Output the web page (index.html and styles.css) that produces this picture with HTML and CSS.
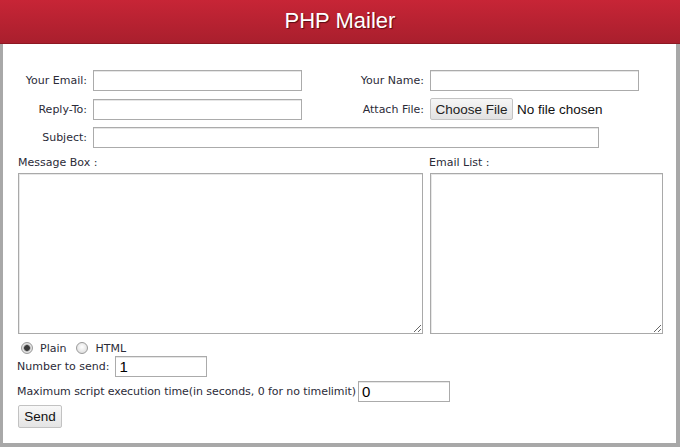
FILE: index.html
```html
<!DOCTYPE html>
<html>
<head>
<meta charset="utf-8">
<title>PHP Mailer</title>
<link rel="stylesheet" href="styles.css">
</head>
<body>
<header class="top"><h1 class="title">PHP Mailer</h1></header>
<main class="page">
  <form class="mailer">
    <div class="fields">
      <label class="lbl">Your Email:</label>
      <input class="txt" type="text">
      <label class="lbl">Your Name:</label>
      <input class="txt" type="text">
      <label class="lbl">Reply-To:</label>
      <input class="txt" type="text">
      <label class="lbl">Attach File:</label>
      <input class="file" type="file">
      <label class="lbl">Subject:</label>
      <input class="txt subject" type="text">
    </div>
    <div class="boxes">
      <div class="box">
        <div class="boxlbl">Message Box :</div>
        <textarea class="area msg"></textarea>
      </div>
      <div class="box">
        <div class="boxlbl">Email List :</div>
        <textarea class="area list"></textarea>
      </div>
    </div>
    <div class="lower">
      <div class="radios">
        <input class="radio" type="radio" name="fmt" checked><span class="rlbl">Plain</span>
        <input class="radio" type="radio" name="fmt"><span class="rlbl">HTML</span>
      </div>
      <div class="line"><span class="lbl2">Number to send:</span><input class="txt small" type="text" value="1"></div>
      <div class="line"><span class="lbl2 long">Maximum script execution time(in seconds, 0 for no timelimit)</span><input class="txt small" type="text" value="0"></div>
      <div class="line"><button class="send" type="button">Send</button></div>
    </div>
  </form>
</main>
</body>
</html>
```

FILE: styles.css
```css
html, body {
  margin: 0;
  padding: 0;
  background: #fff;
}
body {
  width: 680px;
  height: 447px;
  overflow: hidden;
  font-family: "DejaVu Sans", Verdana, sans-serif;
  font-size: 11px;
  color: #2b2b38;
}
.top {
  height: 43px;
  background: linear-gradient(#c72536, #a91f2d);
  border-bottom: 1px solid #8d1823;
  display: flex;
  align-items: center;
  justify-content: center;
}
.title {
  margin: 0;
  font-family: "Liberation Sans", Arial, sans-serif;
  font-weight: normal;
  font-size: 22px;
  color: #fff;
  text-shadow: 1px 1px 1px #5a0c14;
  line-height: 1;
  padding-bottom: 2px;
}
.page {
  height: 403px;
  box-sizing: border-box;
  border-style: solid;
  border-color: #a8a8a8;
  border-width: 0 4px 4px 3px;
}
.mailer {
  padding-top: 26px;
}
.fields {
  display: grid;
  grid-template-columns: 84px 209px 116px 209px;
  column-gap: 6px;
  row-gap: 7px;
  align-items: center;
}
.lbl {
  text-align: right;
  white-space: nowrap;
}
.txt {
  box-sizing: border-box;
  height: 21px;
  margin: 0;
  border: 1px solid #ababab;
  box-shadow: inset 0 1px 0 #e6e6e6;
  padding: 1px 3px;
  font-family: "Liberation Sans", Arial, sans-serif;
  font-size: 15px;
  color: #000;
  outline: none;
}
.subject {
  grid-column: 2 / 5;
  width: 506px;
}
.file {
  margin: 0;
  font-family: "Liberation Sans", Arial, sans-serif;
  font-size: 13.5px;
  color: #111;
  width: 209px;
}
.file::file-selector-button {
  box-sizing: border-box;
  height: 22px;
  width: 83px;
  margin-right: 4px;
  padding: 0;
  font-family: "Liberation Sans", Arial, sans-serif;
  font-size: 13.5px;
  color: #222;
  background: linear-gradient(#f6f6f6, #e2e2e2);
  border: 1px solid #c4c4c4;
  border-radius: 2px;
}
.boxes {
  display: grid;
  grid-template-columns: 405px 233px;
  column-gap: 7px;
  margin-left: 15px;
  margin-top: 8px;
}
.boxlbl {
  line-height: 13px;
  margin-bottom: 4px;
}
.box + .box .boxlbl {
  margin-left: -1px;
}
.area {
  display: block;
  box-sizing: border-box;
  width: 100%;
  height: 161px;
  margin: 0;
  border: 1px solid #a9a9a9;
  box-shadow: inset 1px 1px 0 #e8e8e8;
  resize: both;
  outline: none;
}
.lower {
  margin-left: 14px;
}
.radios {
  display: flex;
  align-items: center;
  height: 14px;
  margin-top: 7px;
  padding-left: 4px;
}
.radio {
  appearance: none;
  -webkit-appearance: none;
  box-sizing: border-box;
  width: 12px;
  height: 12px;
  margin: 0;
  border-radius: 50%;
  border: 1px solid #9a9a9a;
  background: radial-gradient(circle at 50% 40%, #ffffff, #d6d6d6);
}
.radio:checked {
  background: radial-gradient(circle, #3a3a3a 0 2.5px, #8a8a8a 3px, #e9e9e9 4px, #cfcfcf 6px);
}
.rlbl {
  margin-left: 7px;
  margin-right: 10px;
}
.line {
  display: flex;
  align-items: center;
  margin-top: 1px;
}
.line + .line {
  margin-top: 4px;
}
.line + .line + .line {
  margin-top: 3px;
}
.lbl2 {
  margin-right: 6px;
}
.long {
  letter-spacing: -0.07px;
  margin-right: 2px;
}
.small {
  width: 92px;
}
.send {
  margin-left: 1px;
  box-sizing: border-box;
  height: 23px;
  width: 44px;
  padding: 0;
  font-family: "Liberation Sans", Arial, sans-serif;
  font-size: 13.5px;
  color: #111;
  background: linear-gradient(#f8f8f8, #e4e4e4);
  border: 1px solid #c2c2c2;
  border-radius: 2px;
}
```
